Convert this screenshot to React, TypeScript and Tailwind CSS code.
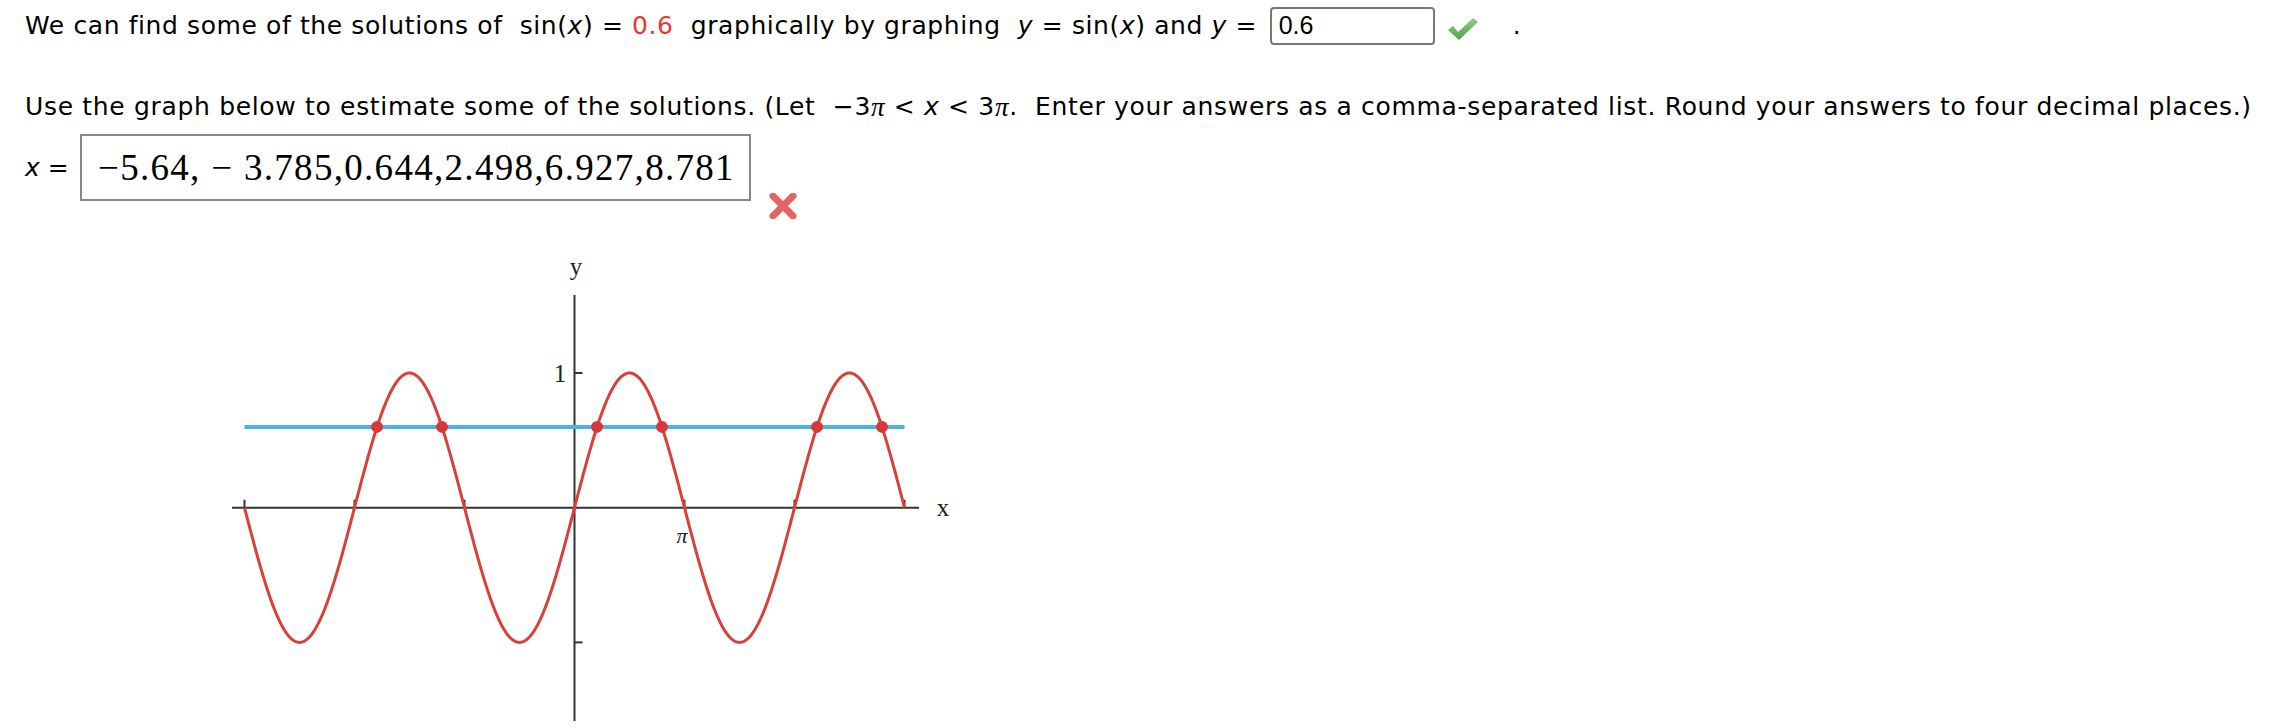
const PI = Math.PI;
const OX = 354.5; // origin inside svg
const OY = 266.7;
const SX = 110 / PI;
const SY = 134.7;

function px(x: number) {
  return OX + x * SX;
}
function py(y: number) {
  return OY - y * SY;
}

function sinePath() {
  const pts: string[] = [];
  const n = 600;
  for (let i = 0; i <= n; i++) {
    const x = -3 * PI + (6 * PI * i) / n;
    pts.push(`${i === 0 ? 'M' : 'L'}${px(x).toFixed(2)},${py(Math.sin(x)).toFixed(2)}`);
  }
  return pts.join(' ');
}

const roots = [-5.6397, -3.7851, 0.6435, 2.4981, 6.9267, 8.7813];

function Graph() {
  const ticksX = [-3, -2, -1, 1, 2, 3];
  return (
    <svg width={760} height={488} viewBox="0 0 760 488" className="block">
      {/* axes */}
      <line x1={12} y1={OY} x2={699} y2={OY} stroke="#333" strokeWidth={2} />
      <line x1={OX} y1={54} x2={OX} y2={480} stroke="#333" strokeWidth={2} />
      {ticksX.map((k) => (
        <line key={k} x1={px(k * PI)} y1={OY - 8} x2={px(k * PI)} y2={OY} stroke="#333" strokeWidth={2} />
      ))}
      <line x1={OX} y1={py(1)} x2={OX + 8} y2={py(1)} stroke="#333" strokeWidth={2} />
      <line x1={OX} y1={py(-1)} x2={OX + 8} y2={py(-1)} stroke="#333" strokeWidth={2} />
      <text x={356} y={34} fontFamily="'Liberation Serif', serif" fontSize={25} textAnchor="middle" fill="#222">y</text>
      <text x={723} y={275} fontFamily="'Liberation Serif', serif" fontSize={25} textAnchor="middle" fill="#222">x</text>
      <text x={340} y={141} fontFamily="'Liberation Serif', serif" fontSize={25} textAnchor="middle" fill="#222">1</text>
      <text x={462} y={302} fontFamily="'Liberation Serif', serif" fontStyle="italic" fontSize={22} textAnchor="middle" fill="#222">π</text>
      {/* y = 0.6 */}
      <line x1={px(-3 * PI)} y1={py(0.6)} x2={px(3 * PI)} y2={py(0.6)} stroke="#4fb0e4" strokeWidth={4} />
      <path d={sinePath()} fill="none" stroke="#d9403a" strokeWidth={3} strokeLinejoin="round" />
      {roots.map((r) => (
        <circle key={r} cx={px(r)} cy={py(0.6)} r={6} fill="#d9383a" />
      ))}
    </svg>
  );
}

function CheckIcon() {
  return (
    <svg width={32} height={24} viewBox="0 0 32 24">
      <defs>
        <linearGradient id="chk" x1="0" y1="0" x2="0" y2="1">
          <stop offset="0" stopColor="#8fd18a" />
          <stop offset="1" stopColor="#4f9f4a" />
        </linearGradient>
      </defs>
      <path d="M1,13 L6,9 L11,15 L26,1 L31,5 L12,23 Z" fill="url(#chk)" />
    </svg>
  );
}

function CrossIcon() {
  return (
    <svg width={28} height={26} viewBox="0 0 28 26">
      <path d="M4,3 L24,23 M24,3 L4,23" stroke="#e46464" strokeWidth={7} strokeLinecap="round" />
    </svg>
  );
}

export default function App() {
  return (
    <div className="w-[2278px] h-[728px] bg-white text-black overflow-hidden" style={{ fontFamily: "'DejaVu Sans', Verdana, sans-serif" }}>
      <div className="pl-[25px]">
        {/* line 1 */}
        <div className="flex items-center h-[52px] text-[25px] tracking-[0.6px] whitespace-pre">
          <span>We can find some of the solutions of  sin(<i>x</i>) = <span className="text-[#e8372e]">0.6</span>  graphically by graphing  <i>y</i> = sin(<i>x</i>) and <i>y</i> = </span>
          <div className="ml-[4px] w-[165px] h-[38px] border-2 border-[#777] rounded-[4px] flex items-center pl-[7px] text-[25px] tracking-normal" style={{ fontFamily: "'Liberation Sans', Arial, sans-serif" }}>
            0.6
          </div>
          <div className="ml-[12px] mt-[6px]">
            <CheckIcon />
          </div>
          <span className="ml-[34px]">.</span>
        </div>
        {/* line 2 */}
        <div className="mt-[40px] h-[30px] flex items-center text-[25px] tracking-[0.67px] whitespace-pre">
          Use the graph below to estimate some of the solutions. (Let  −3<span style={{ fontFamily: "'Liberation Serif', serif" }} className="italic text-[27px]">π</span> &lt; <i>x</i> &lt; 3<span style={{ fontFamily: "'Liberation Serif', serif" }} className="italic text-[27px]">π</span>.  Enter your answers as a comma-separated list. Round your answers to four decimal places.)
        </div>
        {/* line 3 */}
        <div className="mt-[12px] flex items-end">
          <div className="flex items-center h-[67px] text-[25px] w-[55px]">
            <i>x</i>&nbsp;=
          </div>
          <div className="w-[671px] h-[67px] border-2 border-[#888] flex items-center pl-[16px] text-[37px] tracking-[1.3px] whitespace-pre" style={{ fontFamily: "'Liberation Serif', serif" }}>
            −5.64, − 3.785,0.644,2.498,6.927,8.781
          </div>
          <div className="ml-[18px] mb-[-18px]">
            <CrossIcon />
          </div>
        </div>
      </div>
      <div className="ml-[220px] mt-[40px]">
        <Graph />
      </div>
    </div>
  );
}
